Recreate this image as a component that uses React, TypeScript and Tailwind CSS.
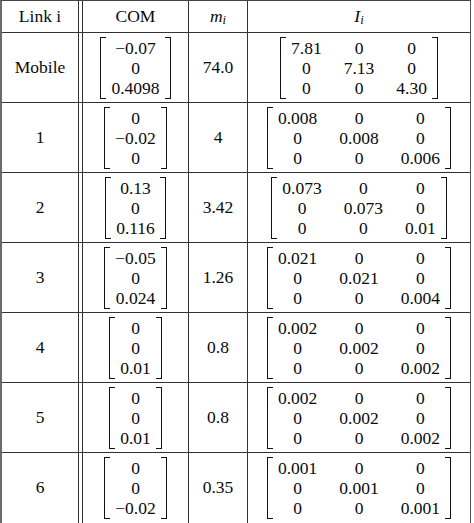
import React from 'react';

type Row = {
  link: string;
  com: string[];
  mass: string;
  inertia: string[][];
};

const rows: Row[] = [
  {
    link: 'Mobile',
    com: ['\u22120.07', '0', '0.4098'],
    mass: '74.0',
    inertia: [
      ['7.81', '0', '0'],
      ['0', '7.13', '0'],
      ['0', '0', '4.30'],
    ],
  },
  {
    link: '1',
    com: ['0', '\u22120.02', '0'],
    mass: '4',
    inertia: [
      ['0.008', '0', '0'],
      ['0', '0.008', '0'],
      ['0', '0', '0.006'],
    ],
  },
  {
    link: '2',
    com: ['0.13', '0', '0.116'],
    mass: '3.42',
    inertia: [
      ['0.073', '0', '0'],
      ['0', '0.073', '0'],
      ['0', '0', '0.01'],
    ],
  },
  {
    link: '3',
    com: ['\u22120.05', '0', '0.024'],
    mass: '1.26',
    inertia: [
      ['0.021', '0', '0'],
      ['0', '0.021', '0'],
      ['0', '0', '0.004'],
    ],
  },
  {
    link: '4',
    com: ['0', '0', '0.01'],
    mass: '0.8',
    inertia: [
      ['0.002', '0', '0'],
      ['0', '0.002', '0'],
      ['0', '0', '0.002'],
    ],
  },
  {
    link: '5',
    com: ['0', '0', '0.01'],
    mass: '0.8',
    inertia: [
      ['0.002', '0', '0'],
      ['0', '0.002', '0'],
      ['0', '0', '0.002'],
    ],
  },
  {
    link: '6',
    com: ['0', '0', '\u22120.02'],
    mass: '0.35',
    inertia: [
      ['0.001', '0', '0'],
      ['0', '0.001', '0'],
      ['0', '0', '0.001'],
    ],
  },
];

// square brackets round a grid of entries, like bmatrix
const Matrix = ({ cells, cols }: { cells: string[][]; cols: number }) => (
  <div className="flex w-max items-stretch">
    <div className="w-[6px] shrink-0 border-y-[1.5px] border-l-[1.5px] border-[#111]" />
    <div
      className={
        cols === 3
          ? 'grid w-max grid-cols-[max-content_max-content_max-content] gap-x-[22px] px-[5px] py-[1px]'
          : 'grid w-max grid-cols-[max-content] px-[5px] py-[1px]'
      }
    >
      {cells.flat().map((v, i) => (
        <div key={i} className="text-center leading-[20px]">
          {v}
        </div>
      ))}
    </div>
    <div className="w-[6px] shrink-0 border-y-[1.5px] border-r-[1.5px] border-[#111]" />
  </div>
);

const App = () => {
  const last = rows.length - 1;
  return (
    <div
      className="h-[523px] w-[474px] overflow-hidden bg-white text-[17.5px] text-[#0a0a0a]"
      style={{ fontFamily: '"Liberation Serif", "Times New Roman", serif' }}
    >
      <div className="w-[471px] border-t border-r border-l-2 border-t-[#444] border-r-[#555] border-l-[#6a6a6a]">
        <div className="flex h-[32px] border-b border-[#333]">
          <div className="flex w-[77px] items-center justify-center border-r border-[#333]">Link i</div>
          <div className="ml-[3px] flex w-[107px] items-center justify-center border-x border-[#333]">COM</div>
          <div className="flex w-[59px] items-center justify-center border-r border-[#333]">
            <span className="italic">m</span>
            <span className="mt-[8px] text-[12.5px] italic">i</span>
          </div>
          <div className="flex flex-1 items-center justify-center">
            <span className="italic">I</span>
            <span className="mt-[8px] text-[12.5px] italic">i</span>
          </div>
        </div>

        {rows.map((r, idx) => (
          <div
            key={r.link}
            className={idx === last ? 'flex h-[80px] border-b border-[#333]' : 'flex h-[70px] border-b border-[#333]'}
          >
            <div className="flex w-[77px] items-center justify-center border-r border-[#333]">
              <span className={idx === last ? 'mb-[10px]' : ''}>{r.link}</span>
            </div>
            <div className="ml-[3px] flex w-[107px] items-center justify-center border-x border-[#333]">
              <div className={idx === last ? 'mb-[10px]' : ''}>
                <Matrix cells={r.com.map((c) => [c])} cols={1} />
              </div>
            </div>
            <div className="flex w-[59px] items-center justify-center border-r border-[#333]">
              <span className={idx === last ? 'mb-[10px]' : ''}>{r.mass}</span>
            </div>
            <div className="flex flex-1 items-center justify-center">
              <div className={idx === last ? 'mb-[10px]' : ''}>
                <Matrix cells={r.inertia} cols={3} />
              </div>
            </div>
          </div>
        ))}
      </div>
    </div>
  );
};

export default App;
